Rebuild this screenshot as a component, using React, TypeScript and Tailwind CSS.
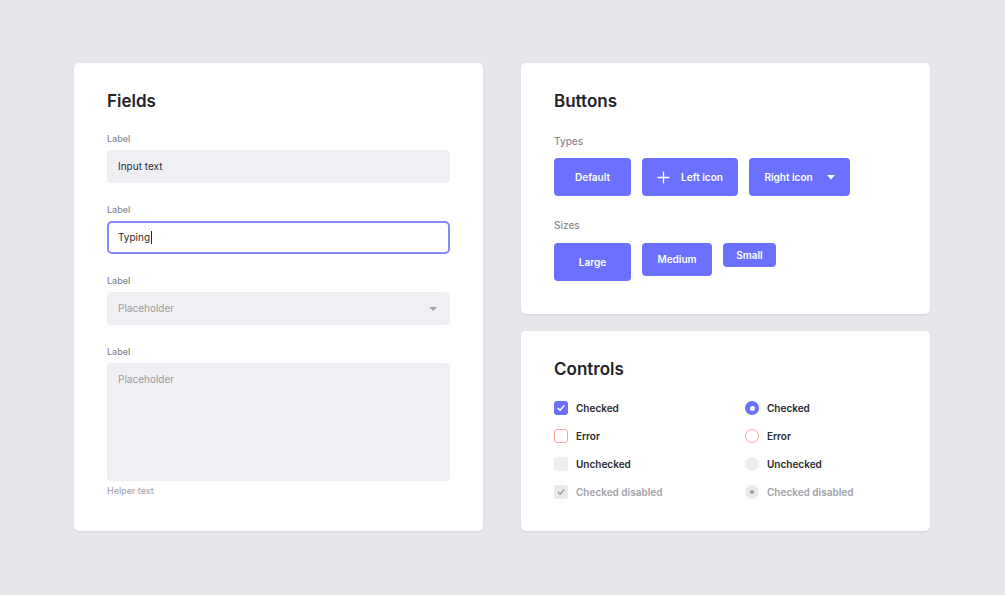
import React from 'react';

const font = { fontFamily: 'Inter, "Noto Sans", sans-serif' };

function Label({ children }: { children: React.ReactNode }) {
  return <div className="text-[9px] leading-[12px] font-medium text-[#86868d]">{children}</div>;
}

function Field({ label, children }: { label: string; children: React.ReactNode }) {
  return (
    <div className="flex flex-col gap-[5px]">
      <Label>{label}</Label>
      {children}
    </div>
  );
}

function Btn({ className, children }: { className: string; children: React.ReactNode }) {
  return (
    <button className={`flex items-center justify-center rounded-[4px] bg-[#6b71fe] text-white text-[10px] font-semibold ${className}`}>
      {children}
    </button>
  );
}

function Check({ kind }: { kind: 'checked' | 'error' | 'unchecked' | 'disabled' }) {
  if (kind === 'checked')
    return (
      <span className="w-[14px] h-[14px] rounded-[3px] bg-[#6b71fe] flex items-center justify-center">
        <svg width="10" height="10" viewBox="0 0 10 10" fill="none">
          <path d="M2 5.2 4.1 7.3 8 2.8" stroke="white" strokeWidth="1.4" strokeLinecap="round" strokeLinejoin="round" />
        </svg>
      </span>
    );
  if (kind === 'error') return <span className="w-[14px] h-[14px] rounded-[3px] border-[1.5px] border-[#f5a59a] bg-white" />;
  if (kind === 'unchecked') return <span className="w-[14px] h-[14px] rounded-[3px] bg-[#efeff3]" />;
  return (
    <span className="w-[14px] h-[14px] rounded-[3px] bg-[#e9e9ed] flex items-center justify-center">
      <svg width="10" height="10" viewBox="0 0 10 10" fill="none">
        <path d="M2 5.2 4.1 7.3 8 2.8" stroke="#9c9ca4" strokeWidth="1.3" strokeLinecap="round" strokeLinejoin="round" />
      </svg>
    </span>
  );
}

function Radio({ kind }: { kind: 'checked' | 'error' | 'unchecked' | 'disabled' }) {
  if (kind === 'checked')
    return (
      <span className="w-[14px] h-[14px] rounded-full bg-[#6b71fe] flex items-center justify-center">
        <span className="w-[5px] h-[5px] rounded-full bg-white" />
      </span>
    );
  if (kind === 'error') return <span className="w-[14px] h-[14px] rounded-full border-[1.5px] border-[#f5a59a] bg-white" />;
  if (kind === 'unchecked') return <span className="w-[14px] h-[14px] rounded-full bg-[#efeff3]" />;
  return (
    <span className="w-[14px] h-[14px] rounded-full bg-[#e9e9ed] flex items-center justify-center">
      <span className="w-[4px] h-[4px] rounded-full bg-[#9c9ca4]" />
    </span>
  );
}

const rows: { kind: 'checked' | 'error' | 'unchecked' | 'disabled'; text: string }[] = [
  { kind: 'checked', text: 'Checked' },
  { kind: 'error', text: 'Error' },
  { kind: 'unchecked', text: 'Unchecked' },
  { kind: 'disabled', text: 'Checked disabled' },
];

export default function App() {
  const card = 'bg-white rounded-[5px] shadow-[0_1px_2px_rgba(0,0,0,0.08)] w-[409px] px-[33px]';
  const title = 'text-[17px] leading-[24px] font-semibold text-[#232327]';
  return (
    <div style={font} className="min-h-screen bg-[#e7e7eb] flex items-center justify-center pr-px pb-px">
      <div className="flex gap-[38px] items-start">
        {/* Fields */}
        <div className={`${card} pt-[26px] pb-[34px] flex flex-col`}>
          <h2 className={title}>Fields</h2>
          <div className="mt-[20px] flex flex-col gap-[21px]">
            <Field label="Label">
              <div className="h-[33px] rounded-[4px] bg-[#f0f0f4] px-[11px] flex items-center text-[10px] text-[#2a2a2e]">Input text</div>
            </Field>
            <Field label="Label">
              <div className="h-[33px] rounded-[5px] bg-white border-2 border-[#8488f8] px-[9px] flex items-center text-[10px] text-[#2a2a2e]">
                Typing<span className="w-px h-[13px] bg-[#2a2a2e] ml-[1px]" />
              </div>
            </Field>
            <Field label="Label">
              <div className="h-[33px] rounded-[4px] bg-[#f0f0f4] px-[11px] flex items-center justify-between text-[10px] text-[#9b9ba2]">
                <span>Placeholder</span>
                <svg width="10" height="6" viewBox="0 0 10 6" className="mr-[1px]">
                  <path d="M1 1h8L5 5z" fill="#a3a3aa" />
                </svg>
              </div>
            </Field>
            <div className="flex flex-col gap-[4px]">
              <Field label="Label">
                <div className="h-[118px] rounded-[4px] bg-[#f0f0f4] px-[11px] pt-[9px] text-[10px] leading-[14px] text-[#9b9ba2]">Placeholder</div>
              </Field>
              <div className="text-[9px] leading-[12px] text-[#9b9ba2]">Helper text</div>
            </div>
          </div>
        </div>

        <div className="flex flex-col gap-[17px]">
          {/* Buttons */}
          <div className={`${card} pt-[26px] pb-[33px]`}>
            <h2 className={title}>Buttons</h2>
            <div className="mt-[21px] text-[10px] leading-[14px] font-medium text-[#8a8a91]">Types</div>
            <div className="mt-[10px] flex gap-[11px]">
              <Btn className="w-[77px] h-[38px]">Default</Btn>
              <Btn className="w-[96px] h-[38px] gap-[11px]">
                <svg width="13" height="13" viewBox="0 0 13 13" fill="none">
                  <path d="M6.5 0.5v12M0.5 6.5h12" stroke="white" strokeWidth="1.3" />
                </svg>
                <span>Left icon</span>
              </Btn>
              <Btn className="w-[101px] h-[38px] gap-[14px]">
                <span>Right icon</span>
                <svg width="8" height="5" viewBox="0 0 8 5">
                  <path d="M0 0h8L4 4.5z" fill="white" />
                </svg>
              </Btn>
            </div>
            <div className="mt-[22px] text-[10px] leading-[14px] font-medium text-[#8a8a91]">Sizes</div>
            <div className="mt-[11px] flex gap-[11px] items-start">
              <Btn className="w-[77px] h-[38px]">Large</Btn>
              <Btn className="w-[70px] h-[33px]">Medium</Btn>
              <Btn className="w-[53px] h-[24px]">Small</Btn>
            </div>
          </div>

          {/* Controls */}
          <div className={`${card} pt-[26px] pb-[32px]`}>
            <h2 className={title}>Controls</h2>
            <div className="mt-[20px] grid grid-cols-[191px_1fr] gap-y-[14px]">
              {rows.map((r) => (
                <React.Fragment key={r.text}>
                  <div className="flex items-center gap-[8px] h-[14px]">
                    <Check kind={r.kind} />
                    <span className={`text-[10px] font-semibold ${r.kind === 'disabled' ? 'text-[#a2a2a9]' : 'text-[#2a2a2e]'}`}>{r.text}</span>
                  </div>
                  <div className="flex items-center gap-[8px] h-[14px]">
                    <Radio kind={r.kind} />
                    <span className={`text-[10px] font-semibold ${r.kind === 'disabled' ? 'text-[#a2a2a9]' : 'text-[#2a2a2e]'}`}>{r.text}</span>
                  </div>
                </React.Fragment>
              ))}
            </div>
          </div>
        </div>
      </div>
    </div>
  );
}
